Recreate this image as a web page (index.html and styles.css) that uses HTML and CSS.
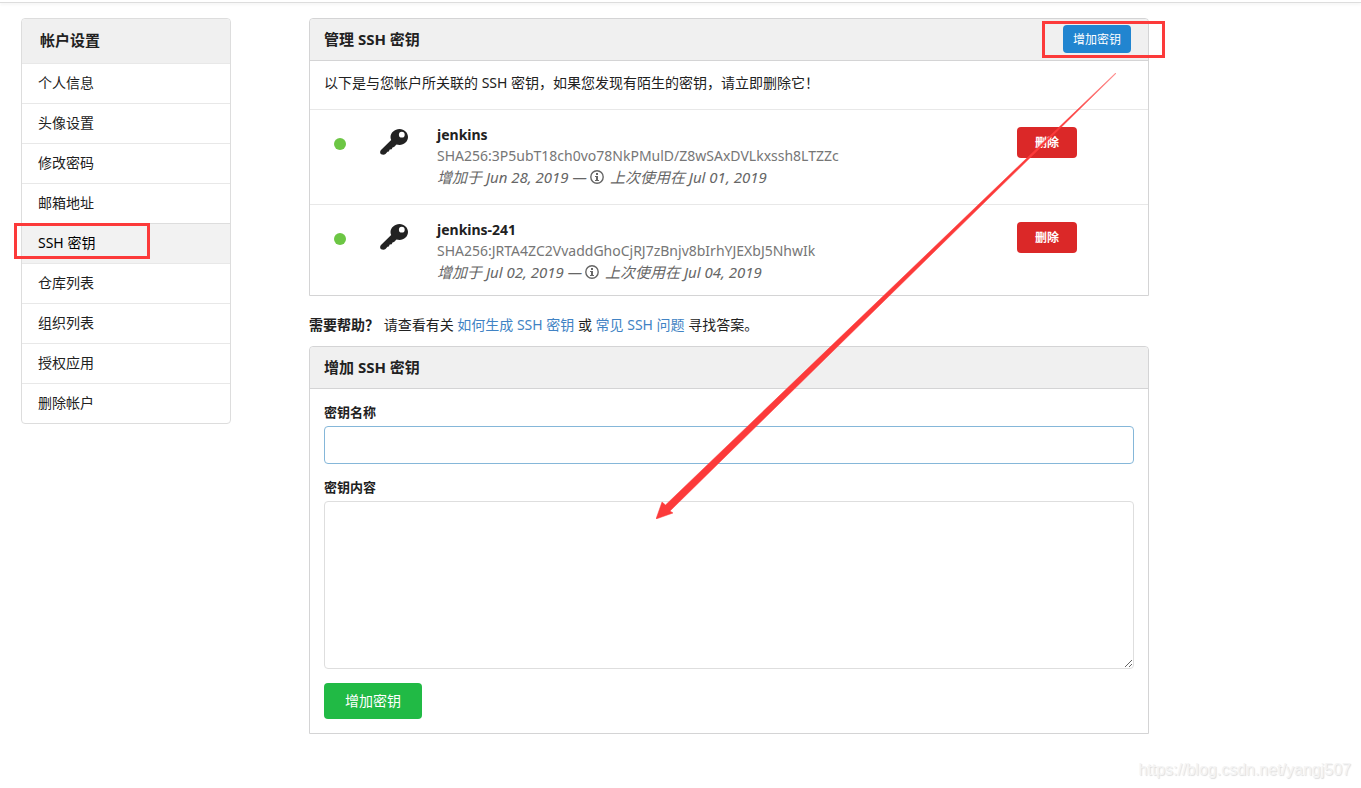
FILE: index.html
```html
<!DOCTYPE html>
<html lang="zh-CN">

<head>
    <meta charset="UTF-8">
    <meta name="viewport" content="width=device-width, initial-scale=1.0">
    <title>管理 SSH 密钥</title>
    <link rel="stylesheet" href="styles.css">
</head>

<body>
    <div class="topbar"></div>
    <div class="container">
        <nav class="menu">
            <h4 class="menu-header">帐户设置</h4>
            <a class="item" href="#">个人信息</a>
            <a class="item" href="#">头像设置</a>
            <a class="item" href="#">修改密码</a>
            <a class="item" href="#">邮箱地址</a>
            <a class="item active" href="#">SSH 密钥<span class="mark mark-menu"></span></a>
            <a class="item" href="#">仓库列表</a>
            <a class="item" href="#">组织列表</a>
            <a class="item" href="#">授权应用</a>
            <a class="item" href="#">删除帐户</a>
        </nav>

        <main class="content">
            <section class="panel">
                <div class="panel-header">
                    <h4>管理 SSH 密钥</h4>
                    <button class="btn btn-blue" type="button">增加密钥</button>
                    <span class="mark mark-add"></span>
                </div>
                <p class="intro">以下是与您帐户所关联的 SSH 密钥，如果您发现有陌生的密钥，请立即删除它！</p>
                <div class="key">
                    <span class="dot"></span>
                    <svg class="key-icon" viewBox="0 0 28 26">
                        <path fill="#222" fill-rule="evenodd" d="M19.500 0c4.800 0 8.500 3.700 8.500 8s-3.700 8-8.500 8c-1 0-2-.2-3-.5L14 18l-1.500.4-.8 1.800-2 .4-.9 1.800-1.300.3L5.500 25c-1 1-3 1-4.300.3C-.2 24.500-.2 22.300 1 21L11.200 11C10.700 10 10.500 9 10.500 8c0-4.300 4.200-8 9-8zM21.800 2.800a2.900 2.900 0 1 0 0 5.800a2.900 2.900 0 1 0 0-5.800z"/>
                    </svg>
                    <div class="key-info">
                        <strong>jenkins</strong>
                        <div class="print">SHA256:3P5ubT18ch0vo78NkPMulD/Z8wSAxDVLkxssh8LTZZc</div>
                        <div class="activity">
                            <i>增加于 Jun 28, 2019 —</i>
                            <svg class="info-icon" viewBox="0 0 14 14"><circle cx="7" cy="7" r="6.200" fill="none" stroke="#666" stroke-width="1.400"/><path fill="#666" d="M6 3h2v2H6zM5 6h3v4h1v1H5v-1h1V7H5z"/></svg>
                            <i>上次使用在 Jul 01, 2019</i>
                        </div>
                    </div>
                    <button class="btn btn-red" type="button">删除</button>
                </div>
                <div class="key">
                    <span class="dot"></span>
                    <svg class="key-icon" viewBox="0 0 28 26">
                        <path fill="#222" fill-rule="evenodd" d="M19.500 0c4.800 0 8.500 3.700 8.500 8s-3.700 8-8.500 8c-1 0-2-.2-3-.5L14 18l-1.500.4-.8 1.800-2 .4-.9 1.800-1.300.3L5.500 25c-1 1-3 1-4.300.3C-.2 24.500-.2 22.300 1 21L11.200 11C10.700 10 10.500 9 10.500 8c0-4.300 4.200-8 9-8zM21.800 2.800a2.900 2.900 0 1 0 0 5.800a2.900 2.900 0 1 0 0-5.800z"/>
                    </svg>
                    <div class="key-info">
                        <strong>jenkins-241</strong>
                        <div class="print">SHA256:JRTA4ZC2VvaddGhoCjRJ7zBnjv8bIrhYJEXbJ5NhwIk</div>
                        <div class="activity">
                            <i>增加于 Jul 02, 2019 —</i>
                            <svg class="info-icon" viewBox="0 0 14 14"><circle cx="7" cy="7" r="6.200" fill="none" stroke="#666" stroke-width="1.400"/><path fill="#666" d="M6 3h2v2H6zM5 6h3v4h1v1H5v-1h1V7H5z"/></svg>
                            <i>上次使用在 Jul 04, 2019</i>
                        </div>
                    </div>
                    <button class="btn btn-red" type="button">删除</button>
                </div>
            </section>

            <p class="help"><strong>需要帮助？</strong> 请查看有关 <a href="#">如何生成 SSH 密钥</a> 或 <a href="#">常见 SSH 问题</a> 寻找答案。</p>

            <section class="panel">
                <div class="panel-header">
                    <h4>增加 SSH 密钥</h4>
                </div>
                <form class="key-form">
                    <label for="title">密钥名称</label>
                    <input id="title" name="title" type="text">
                    <label for="content">密钥内容</label>
                    <textarea id="content" name="content"></textarea>
                    <button class="btn btn-green" type="button">增加密钥</button>
                </form>
            </section>

            <svg class="arrow" viewBox="0 0 460 446">
                <defs>
                    <linearGradient id="fade" x1="1" y1="0" x2="0" y2="1">
                        <stop offset="0" stop-color="#fc3a3a" stop-opacity="0.5"/>
                        <stop offset="0.100" stop-color="#fc3a3a"/>
                    </linearGradient>
                </defs>
                <path fill="url(#fade)" d="M459.500 0L9.500 432l-3.500-3L0 446l17-6-3-2L460.500 0z" stroke="url(#fade)" stroke-width="0.500"/>
            </svg>
        </main>
    </div>
    <div class="watermark">https://blog.csdn.net/yangj507</div>
</body>

</html>
```
FILE: styles.css
```css
* {
    box-sizing: border-box;
}

body {
    position: relative;
    min-height: 100vh;
    margin: 0;
    background-color: #fff;
    color: #212121;
    font-family: "Noto Sans", "Noto Sans CJK SC", sans-serif;
    font-size: 14px;
    line-height: 20px;
}

h4,
p {
    margin: 0;
}

a {
    color: #4183c4;
    text-decoration: none;
}

.topbar {
    height: 3px;
    border-bottom: 1px solid #ddd;
    box-shadow: 0 2px 3px rgba(0, 0, 0, 0.04);
}

.container {
    display: grid;
    grid-template-columns: 210px minmax(0, 840px);
    column-gap: 78px;
    align-items: start;
    padding: 15px 21px;
}

/* side menu */
.menu {
    border: 1px solid #ddd;
    border-radius: 4px;
}

.menu-header {
    padding: 11px 18px 13px;
    background-color: #f0f0f0;
    border-radius: 4px 4px 0 0;
    font-size: 15px;
}

.item {
    display: block;
    position: relative;
    height: 40px;
    padding: 9px 16px;
    border-top: 1px solid #e8e8e8;
    color: #212121;
}

.item.active {
    background-color: #f2f2f2;
    border-top-color: #ddd;
    color: #000;
}

/* panels */
.content {
    position: relative;
}

.panel {
    border: 1px solid #d4d4d5;
    border-radius: 4px 4px 0 0;
}

.panel-header {
    display: flex;
    position: relative;
    align-items: center;
    justify-content: space-between;
    height: 42px;
    padding: 0 17px 2px 14px;
    background-color: #f0f0f0;
    border-bottom: 1px solid #d4d4d5;
    border-radius: 4px 4px 0 0;
}

.panel-header h4 {
    font-size: 15px;
}

.intro {
    padding: 12px 14px 16px;
}

.btn {
    padding: 0 0 2px;
    border: 0;
    border-radius: 4px;
    color: #fff;
    font-family: inherit;
    cursor: pointer;
}

.btn-blue {
    width: 68px;
    height: 28px;
    padding: 0;
    background-color: #2185d0;
    font-size: 12px;
}

.btn-red {
    width: 60px;
    height: 31px;
    background-color: #db2828;
    font-size: 12px;
    font-weight: bold;
}

.btn-green {
    width: 98px;
    height: 36px;
    background-color: #21ba45;
    font-size: 14px;
}

.key {
    display: grid;
    grid-template-columns: 46px 57px 1fr 60px;
    align-items: start;
    padding: 14px 71px 16px 24px;
    border-top: 1px solid #e8e8e8;
}

.key + .key {
    padding-bottom: 12px;
}

.dot {
    width: 12px;
    height: 12px;
    margin-top: 14px;
    background-color: #6cc644;
    border-radius: 50%;
}

.key-icon {
    width: 28px;
    height: 26px;
    margin-top: 5px;
}

.key-info {
    line-height: 21px;
}

.key .btn {
    margin-top: 3px;
}

.print {
    color: #767676;
}

.activity {
    display: flex;
    align-items: center;
    height: 22px;
    color: #666;
    font-size: 15px;
}

.info-icon {
    width: 14px;
    height: 14px;
    margin: 0 6px 0 3px;
}

.help {
    padding: 19px 0 11px;
}

.help strong {
    margin-right: 1px;
}

.help a:hover {
    color: #1e70bf;
}

/* add key form */
.key-form {
    display: flex;
    flex-direction: column;
    padding: 13px 14px 14px;
}

.key-form label {
    margin-bottom: 4px;
    font-size: 13px;
    font-weight: bold;
}

.key-form input,
.key-form textarea {
    width: 100%;
    padding: 8px 14px;
    border: 1px solid #dedede;
    border-radius: 4px;
    outline: none;
    font-family: inherit;
    font-size: 14px;
}

.key-form input {
    height: 38px;
    margin-bottom: 13px;
    border-color: #85b7d9;
}

.key-form textarea {
    height: 168px;
    margin-bottom: 14px;
    resize: vertical;
}

/* red marks over the page */
.mark {
    position: absolute;
    border: 3px solid #fc3a3a;
    pointer-events: none;
}

.mark-menu {
    top: -1px;
    left: -8px;
    width: 136px;
    height: 36px;
}

.mark-add {
    top: 2px;
    right: -17px;
    width: 123px;
    height: 37px;
}

.arrow {
    position: absolute;
    top: 55px;
    right: 33px;
    width: 460px;
    height: 446px;
    pointer-events: none;
}

.watermark {
    position: absolute;
    right: 10px;
    bottom: 8px;
    color: #f4f4f4;
    font-family: "Liberation Sans", Arial, sans-serif;
    font-size: 16px;
    text-shadow: 1px 1px 1px #ddd;
}
```
